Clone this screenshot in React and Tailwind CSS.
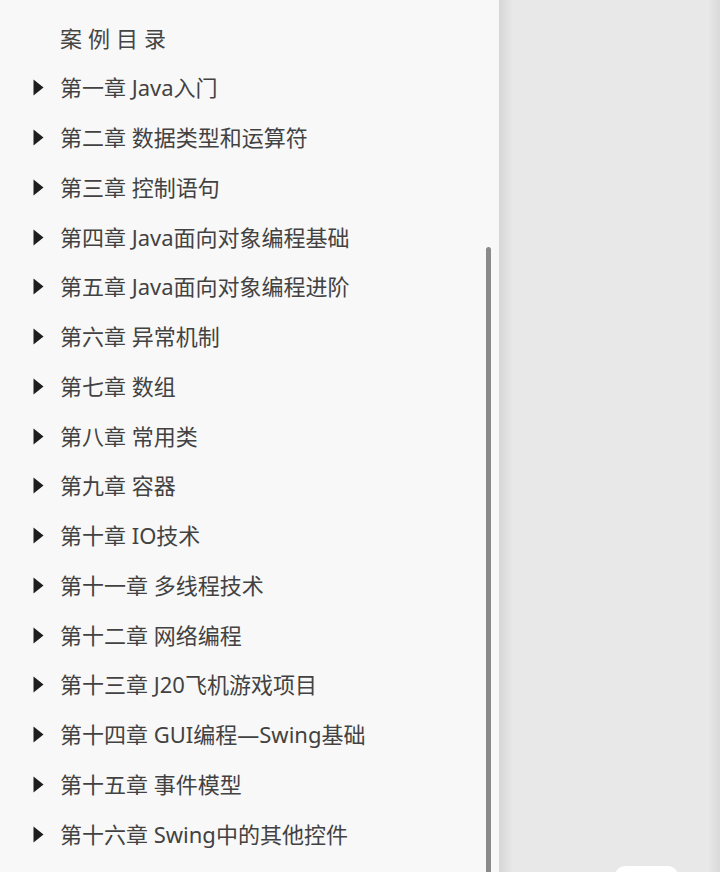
import React from 'react';

const chapters = [
  '第一章 Java入门',
  '第二章 数据类型和运算符',
  '第三章 控制语句',
  '第四章 Java面向对象编程基础',
  '第五章 Java面向对象编程进阶',
  '第六章 异常机制',
  '第七章 数组',
  '第八章 常用类',
  '第九章 容器',
  '第十章 IO技术',
  '第十一章 多线程技术',
  '第十二章 网络编程',
  '第十三章 J20飞机游戏项目',
  '第十四章 GUI编程—Swing基础',
  '第十五章 事件模型',
  '第十六章 Swing中的其他控件',
];

const Caret = () => (
  <svg width="11" height="17" viewBox="0 0 11 17" className="shrink-0">
    <path d="M0.5 0.5 L10.5 8.5 L0.5 16.5 Z" fill="#1e1e1e" />
  </svg>
);

export default function App() {
  return (
    <div
      className="flex h-[872px] w-[720px] overflow-hidden"
      style={{ fontFamily: '"Noto Sans", "Noto Sans CJK SC", sans-serif' }}
    >
      {/* Catalogue sidebar */}
      <div className="relative w-[499px] shrink-0 bg-[#f8f8f8] pt-[13px]">
        <div className="flex h-[50px] items-center pl-[60px] text-[22px] tracking-[6px] text-[#454545]">
          案例目录
        </div>
        {chapters.map((c) => (
          <div key={c} className="flex h-[49.75px] items-center pl-[33px]">
            <Caret />
            <span className="ml-[16px] whitespace-nowrap text-[22px] text-[#424242]">{c}</span>
          </div>
        ))}
        {/* scrollbar thumb */}
        <div className="absolute left-[486px] top-[247px] h-[640px] w-[5px] rounded-t-full bg-[#8a8a8a]" />
      </div>

      {/* Content area */}
      <div className="relative flex-1 bg-[#e8e8e8]">
        <div className="absolute inset-y-0 left-0 w-[14px] bg-gradient-to-r from-[#d6d6d6] to-transparent" />
        <div className="absolute inset-y-0 right-0 w-[12px] bg-gradient-to-l from-[#dadada] to-transparent" />
        <div className="absolute left-[116px] top-[866px] h-[20px] w-[63px] rounded-t-[10px] bg-white" />
      </div>
    </div>
  );
}
